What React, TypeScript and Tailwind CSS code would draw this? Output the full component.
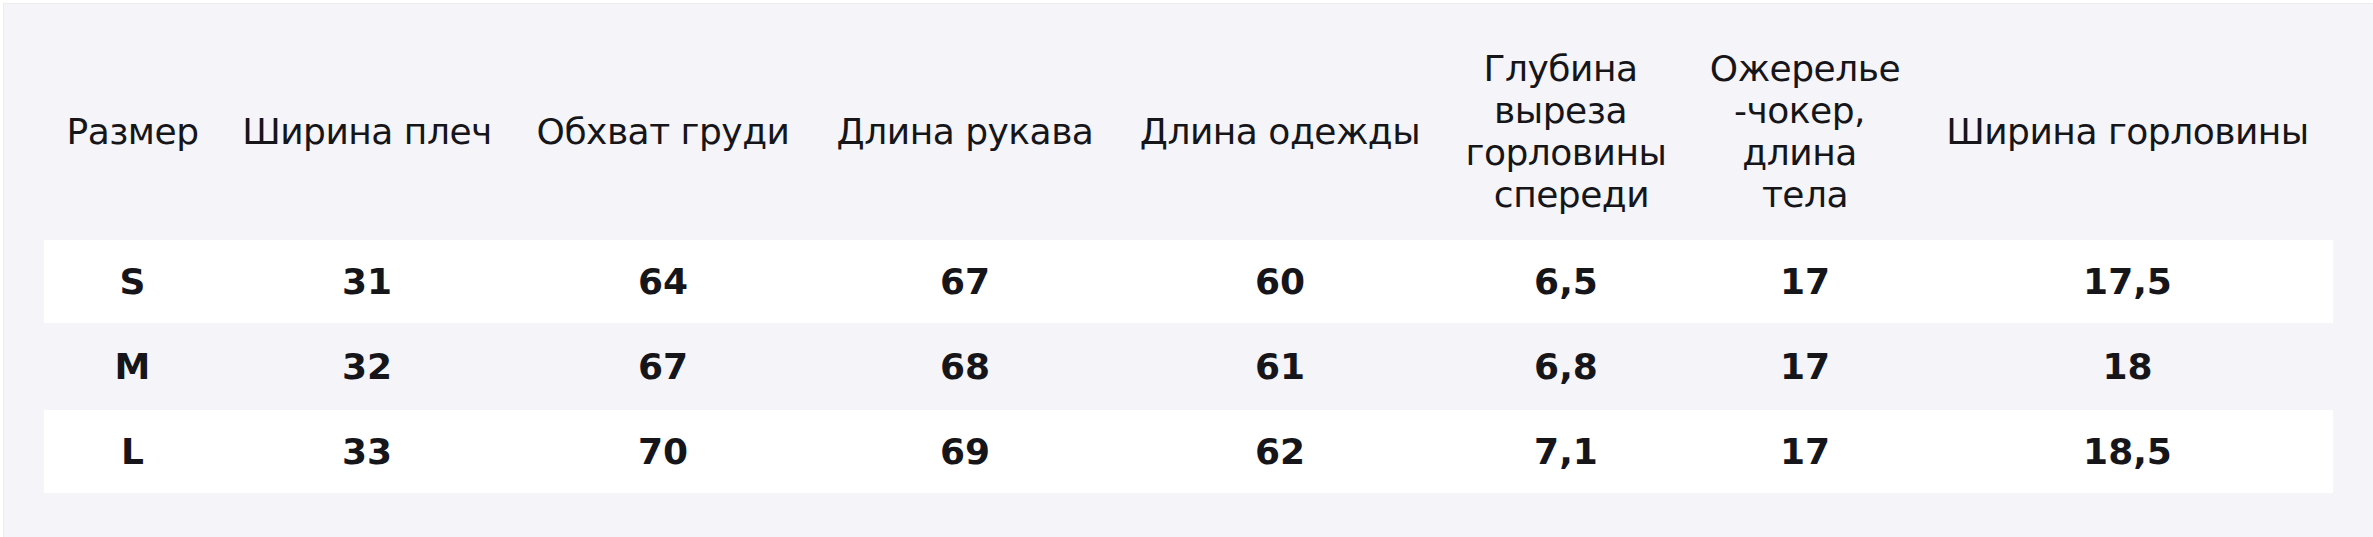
const columns = [
  { w: "w-[177px]", head: ["Размер"] },
  { w: "w-[292px]", head: ["Ширина плеч"] },
  { w: "w-[300px]", head: ["Обхват груди"] },
  { w: "w-[304px]", head: ["Длина рукава"] },
  { w: "w-[326px]", head: ["Длина одежды"] },
  { w: "w-[246px]", head: ["Глубина\u00a0", "выреза\u00a0", "горловины", "\u00a0спереди"] },
  { w: "w-[232px]", head: ["Ожерелье", "-чокер,\u00a0", "длина\u00a0", "тела"] },
  { w: "w-[413px]", head: ["Ширина горловины"] },
];

const rows = [
  { h: "h-[83px]", bg: "bg-white", cells: ["S", "31", "64", "67", "60", "6,5", "17", "17,5"] },
  { h: "h-[87px]", bg: "bg-transparent", cells: ["M", "32", "67", "68", "61", "6,8", "17", "18"] },
  { h: "h-[83px]", bg: "bg-white", cells: ["L", "33", "70", "69", "62", "7,1", "17", "18,5"] },
];

export default function App() {
  return (
    <div className="w-[2373px] h-[537px] overflow-hidden bg-white pl-[3px] pt-[3px]">
      <div
        className="h-[534px] bg-[#f4f4f9] border-l border-t border-[#ececf1] px-[40px] pt-[20px] text-[#16161a]"
        style={{ fontFamily: '"DejaVu Sans", "Noto Sans", sans-serif' }}
      >
        {/* header */}
        <div className="flex h-[216px]">
          {columns.map((c, i) => (
            <div key={i} className={`${c.w} shrink-0 flex flex-col items-center justify-center text-[36px] leading-[42px] tracking-[-0.5px] font-normal`}>
              {c.head.map((line, j) => (
                <span key={j} className="whitespace-pre text-center">{line}</span>
              ))}
            </div>
          ))}
        </div>

        {/* body */}
        {rows.map((r, i) => (
          <div key={i} className={`flex ${r.h} ${r.bg}`}>
            {r.cells.map((v, j) => (
              <div key={j} className={`${columns[j].w} shrink-0 flex items-center justify-center text-[36px] leading-[42px] font-bold`}>
                {v}
              </div>
            ))}
          </div>
        ))}
      </div>
    </div>
  );
}
